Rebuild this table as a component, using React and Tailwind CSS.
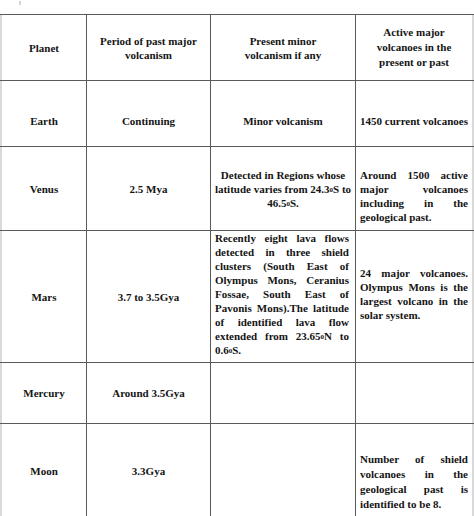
import React from "react";

const Deg = () => <sup className="text-[7px] relative -top-[1px]">0</sup>;

function Lines({ lines, last = "left" }) {
  return (
    <div className="w-full">
      {lines.map((l, i) => {
        const isLast = i === lines.length - 1;
        return (
          <div
            key={i}
            className={
              isLast
                ? last === "left"
                  ? "text-left whitespace-nowrap"
                  : "text-center whitespace-nowrap"
                : "text-justify [text-align-last:justify] whitespace-nowrap"
            }
          >
            {l}
          </div>
        );
      })}
    </div>
  );
}

function Row({ h, children, last }) {
  return (
    <div
      className={`grid grid-cols-[87px_124px_145px_118px] ${h} ${
        last ? "" : "border-b border-[#5a5a5a]"
      }`}
    >
      {children}
    </div>
  );
}

const c1 =
  "border-l-2 border-l-[#d9d9d9] border-r border-r-[#5a5a5a] flex justify-center text-center";
const c2 = "border-r border-[#5a5a5a] flex justify-center text-center";
const c3 = "border-r border-[#5a5a5a] flex justify-center";
const c4 = "border-r-2 border-[#d9d9d9] flex justify-center";

export default function App() {
  return (
    <div className="w-[474px] h-[516px] overflow-hidden bg-white text-[#141414] font-['Liberation_Serif'] font-bold text-[11px] leading-[14px]">
      <div className="h-[13px]">
        <div className="ml-[19px] mt-[1px] w-[2px] h-[4px] bg-[#d4d4d4]" />
      </div>
      <div className="border-t border-[#5a5a5a]">
        {/* header */}
        <Row h="h-[66px]">
          <div className={`${c1} items-center`}>Planet</div>
          <div className={`${c2} items-center leading-[14px]`}>
            <div>
              Period of past major
              <br />
              volcanism
            </div>
          </div>
          <div className={`${c3} items-center text-center leading-[14px]`}>
            <div>
              Present minor
              <br />
              volcanism if any
            </div>
          </div>
          <div className={`${c4} items-center text-center leading-[15px]`}>
            <div>
              Active major
              <br />
              volcanoes in the
              <br />
              present or past
            </div>
          </div>
        </Row>
        {/* Earth */}
        <Row h="h-[66px]">
          <div className={`${c1} items-start pt-[33px]`}>Earth</div>
          <div className={`${c2} items-start pt-[33px]`}>Continuing</div>
          <div className={`${c3} items-start pt-[33px] text-center`}>
            Minor volcanism
          </div>
          <div className={`${c4} items-start pt-[33px] text-center whitespace-nowrap`}>
            1450 current volcanoes
          </div>
        </Row>
        {/* Venus */}
        <Row h="h-[84px]">
          <div className={`${c1} items-center`}>Venus</div>
          <div className={`${c2} items-center`}>2.5 Mya</div>
          <div className={`${c3} items-center text-center px-[3px]`}>
            <div className="whitespace-nowrap">
              Detected in Regions whose
              <br />
              latitude varies from 24.3<Deg />S to
              <br />
              46.5<Deg />S.
            </div>
          </div>
          <div className={`${c4} items-start pt-[21px] pl-[4px] pr-[4px]`}>
            <Lines
              lines={[
                "Around 1500 active",
                "major volcanoes",
                "including in the",
                "geological past.",
              ]}
            />
          </div>
        </Row>
        {/* Mars */}
        <Row h="h-[132px]">
          <div className={`${c1} items-center`}>Mars</div>
          <div className={`${c2} items-center`}>3.7 to 3.5Gya</div>
          <div className={`${c3} items-start pt-[0px] pl-[4px] pr-[6px]`}>
            <Lines
              lines={[
                "Recently eight lava flows",
                "detected in three shield",
                "clusters (South East of",
                "Olympus Mons, Ceranius",
                "Fossae, South East of",
                "Pavonis Mons).The latitude",
                "of identified lava flow",
                <>
                  extended from 23.65<Deg />N to
                </>,
                <>
                  0.6<Deg />S.
                </>,
              ]}
            />
          </div>
          <div className={`${c4} items-start pt-[35px] pl-[4px] pr-[4px]`}>
            <Lines
              lines={[
                "24 major volcanoes.",
                "Olympus Mons is the",
                "largest volcano in the",
                "solar system.",
              ]}
            />
          </div>
        </Row>
        {/* Mercury */}
        <Row h="h-[61px]">
          <div className={`${c1} items-center`}>Mercury</div>
          <div className={`${c2} items-center`}>Around 3.5Gya</div>
          <div className={c3} />
          <div className={c4} />
        </Row>
        {/* Moon */}
        <Row h="h-[94px]">
          <div className={`${c1} items-center`}>Moon</div>
          <div className={`${c2} items-center`}>3.3Gya</div>
          <div className={c3} />
          <div className={`${c4} items-start pt-[28px] pl-[4px] pr-[4px] leading-[15px]`}>
            <Lines
              lines={[
                "Number of shield",
                "volcanoes in the",
                "geological past is",
                "identified to be 8.",
              ]}
            />
          </div>
        </Row>
      </div>
    </div>
  );
}
